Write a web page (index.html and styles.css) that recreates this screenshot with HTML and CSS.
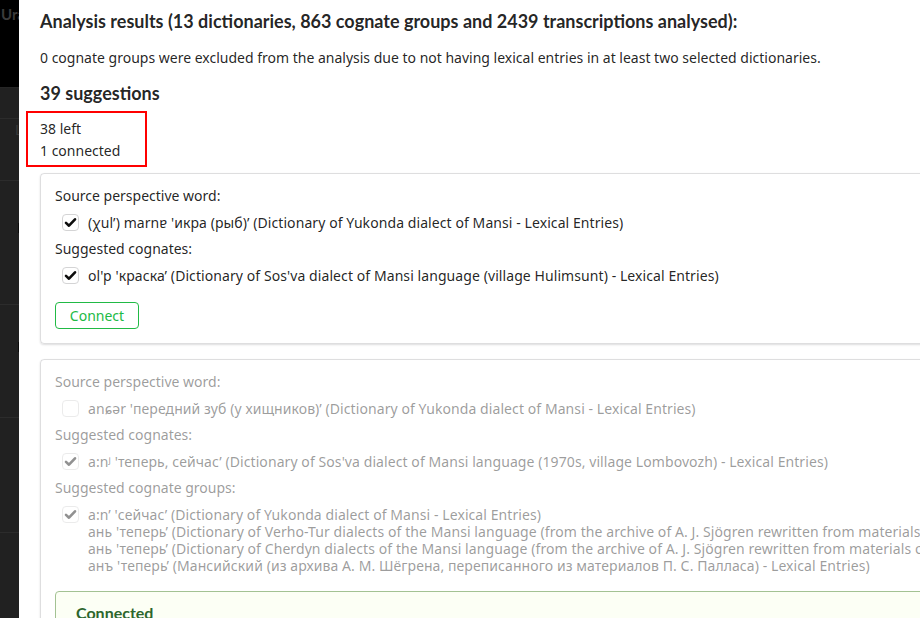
FILE: index.html
```html
<!DOCTYPE html>
<html lang="en">
<head>
<meta charset="utf-8">
<title>Cognate analysis</title>
<link rel="stylesheet" href="styles.css">
</head>
<body>
<div class="backdrop">
  <div class="topbar">Ura</div>
  <div class="brow h31"></div>
  <div class="brow h62"><span class="bl">L</span></div>
  <div class="brow h124"><i class="mark m1"></i></div>
  <div class="brow h113"><i class="mark m2"></i></div>
  <div class="brow h115"></div>
  <div class="brow grow"></div>
</div>
<div class="modal">
  <h2 class="title">Analysis results (13 dictionaries, 863 cognate groups and 2439 transcriptions analysed):</h2>
  <p class="note">0 cognate groups were excluded from the analysis due to not having lexical entries in at least two selected dictionaries.</p>
  <h3 class="count">39 suggestions</h3>
  <div class="stats">
    <div>38 left</div>
    <div>1 connected</div>
  </div>

  <div class="card">
    <div class="label">Source perspective word:</div>
    <div class="row"><span class="cb checked"><svg viewBox="0 0 16 16"><path d="M3.2 8.4 L6.4 11.4 L12.8 4.6" /></svg></span><span class="txt">(χul’) marnɐ 'икра (рыб)’ (Dictionary of Yukonda dialect of Mansi - Lexical Entries)</span></div>
    <div class="label">Suggested cognates:</div>
    <div class="row"><span class="cb checked"><svg viewBox="0 0 16 16"><path d="M3.2 8.4 L6.4 11.4 L12.8 4.6" /></svg></span><span class="txt">ol'p 'краска’ (Dictionary of Sos'va dialect of Mansi language (village Hulimsunt) - Lexical Entries)</span></div>
    <button class="btn-connect" type="button">Connect</button>
  </div>

  <div class="card">
    <div class="dim">
      <div class="label">Source perspective word:</div>
      <div class="row"><span class="cb"></span><span class="txt">anɕər 'передний зуб (у хищников)’ (Dictionary of Yukonda dialect of Mansi - Lexical Entries)</span></div>
      <div class="label">Suggested cognates:</div>
      <div class="row"><span class="cb checked"><svg viewBox="0 0 16 16"><path d="M3.2 8.4 L6.4 11.4 L12.8 4.6" /></svg></span><span class="txt">a:nʲ 'теперь, сейчас’ (Dictionary of Sos'va dialect of Mansi language (1970s, village Lombovozh) - Lexical Entries)</span></div>
      <div class="label">Suggested cognate groups:</div>
      <div class="row multi"><span class="cb checked"><svg viewBox="0 0 16 16"><path d="M3.2 8.4 L6.4 11.4 L12.8 4.6" /></svg></span><span class="txt">
        <span class="ln">a:n’ 'сейчас’ (Dictionary of Yukonda dialect of Mansi - Lexical Entries)</span>
        <span class="ln">ань 'теперь’ (Dictionary of Verho-Tur dialects of the Mansi language (from the archive of A. J. Sjögren rewritten from materials of P. S. Pallas) - Lexical Entries)</span>
        <span class="ln">ань 'теперь’ (Dictionary of Cherdyn dialects of the Mansi language (from the archive of A. J. Sjögren rewritten from materials of P. S. Pallas) - Lexical Entries)</span>
        <span class="ln">анъ 'теперь’ (Мансийский (из архива А. М. Шёгрена, переписанного из материалов П. С. Палласа) - Lexical Entries)</span>
      </span></div>
    </div>
    <div class="success">
      <div class="success-head">Connected</div>
      <p>Suggested cognates were successfully connected.</p>
    </div>
  </div>
</div>
</body>
</html>
```

FILE: styles.css
```css
html, body {
  margin: 0;
  height: 100%;
}

body {
  display: flex;
  overflow: hidden;
  background: #202020;
  font-family: "Noto Sans", "Open Sans", sans-serif;
  font-size: 14px;
  color: rgba(0, 0, 0, 0.87);
}

/* page behind the dimmer */
.backdrop {
  flex: none;
  width: 19px;
  overflow: hidden;
  display: flex;
  flex-direction: column;
  background: #212121;
}

.topbar {
  height: 87px;
  flex: none;
  box-sizing: border-box;
  padding: 5px 0 0 1px;
  background: #000;
  color: #3b3b3b;
  font: bold 15px Lato, sans-serif;
  white-space: nowrap;
}

.brow {
  flex: none;
  box-sizing: border-box;
  border-top: 1px solid #2c2c2c;
  position: relative;
}

.brow:nth-child(2) { border-top-color: #262626; }
.h31 { height: 31px; }
.h62 { height: 62px; }
.h124 { height: 124px; }
.h113 { height: 113px; }
.h115 { height: 115px; }
.grow { flex: 1; }

.bl {
  display: block;
  padding: 2px 0 0 15px;
  color: #3a3a3a;
  font: 14px Lato, sans-serif;
}

.mark {
  position: absolute;
  right: 0;
  width: 1px;
  height: 10px;
  background: #0c0c0c;
}
.m1 { top: 42px; }
.m2 { top: 37px; }

/* modal */
.modal {
  flex: none;
  width: 1240px;
  box-sizing: border-box;
  padding: 10px 21px;
  background: #fff;
  white-space: nowrap;
}

.title {
  margin: 0;
  font: bold 18px/22px Lato, sans-serif;
  color: rgba(0, 0, 0, 0.87);
}

.note {
  margin: 16px 0 0;
  line-height: 20px;
}

.count {
  margin: 14px 0 0;
  font: bold 18px/22px Lato, sans-serif;
}

.stats {
  width: fit-content;
  margin: 7px 0 0 -14px;
  padding: 5px 25px 3px 12px;
  border: 2px solid #f00;
  line-height: 22px;
}

.card {
  margin-top: 6px;
  padding: 12px 14px 14px;
  border: 1px solid rgba(34, 36, 38, 0.15);
  border-radius: 4px;
  box-shadow: 0 1px 2px 0 rgba(34, 36, 38, 0.15);
}

.card + .card {
  margin-top: 15px;
}

.label {
  line-height: 20px;
  margin-bottom: 7px;
}

.row {
  display: flex;
  align-items: center;
  min-height: 18px;
  line-height: 17px;
  margin-bottom: 8px;
}

.row.multi {
  align-items: flex-start;
  padding-top: 1px;
}

.cb {
  flex: none;
  box-sizing: border-box;
  width: 17px;
  height: 17px;
  margin: 0 9px 0 7px;
  border: 1px solid #d4d4d5;
  border-radius: 4px;
  background: #fff;
}

.cb svg {
  display: block;
  width: 15px;
  height: 15px;
}

.cb path {
  fill: none;
  stroke: rgba(0, 0, 0, 0.95);
  stroke-width: 2.8;
  stroke-linecap: round;
  stroke-linejoin: round;
}

.txt {
  display: flex;
  flex-direction: column;
  letter-spacing: 0.08px;
}

.dim {
  opacity: 0.45;
}

.btn-connect {
  display: block;
  margin-top: 18px;
  width: 84px;
  height: 27px;
  padding: 0;
  border: 1px solid #21ba45;
  border-radius: 4px;
  background: #fff;
  color: #21ba45;
  font: 14px "Noto Sans", sans-serif;
}

.success {
  margin-top: 17px;
  padding: 11px 20px;
  border: 1px solid #a3c293;
  border-radius: 4px;
  background: #fcfff5;
  color: #2c662d;
}

.success-head {
  font: bold 16px/20px Lato, sans-serif;
}

.success p {
  margin: 4px 0 0;
}
```
